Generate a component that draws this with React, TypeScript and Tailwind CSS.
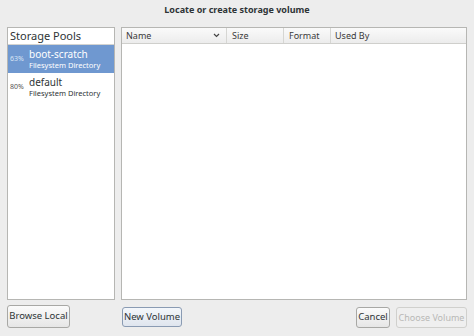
export default function App() {
  return (
    <div
      className="flex h-[336px] w-[474px] flex-col bg-[#ededed] text-[#2e3436]"
      style={{ fontFamily: '"Noto Sans", "DejaVu Sans", sans-serif' }}
    >
      {/* Title bar */}
      <div className="flex h-[20px] items-center justify-center text-[9px] font-bold text-[#2e3436]">
        Locate or create storage volume
      </div>

      {/* Panels */}
      <div className="flex flex-1 gap-[6px] px-[7px] pt-[7px]">
        <div className="flex w-[108px] flex-col border border-[#b6b6b3] bg-white">
          <div className="flex h-[17px] items-center border-b border-[#d3d3d0] px-[2px] text-[11px]">
            Storage Pools
          </div>
          <div className="flex h-[28px] items-center bg-[#6f98d0] text-white">
            <span className="w-[21px] pl-[2px] text-[7px] leading-[8px] text-[#dbe6f5]">63%</span>
            <div className="flex flex-col">
              <span className="text-[10px] leading-[12px]">boot-scratch</span>
              <span className="text-[7.5px] leading-[10px]">Filesystem Directory</span>
            </div>
          </div>
          <div className="flex h-[28px] items-center">
            <span className="w-[21px] pl-[2px] text-[7px] leading-[8px] text-[#555]">80%</span>
            <div className="flex flex-col">
              <span className="text-[10px] leading-[12px]">default</span>
              <span className="text-[7.5px] leading-[10px]">Filesystem Directory</span>
            </div>
          </div>
        </div>

        <div className="flex flex-1 flex-col border border-[#b6b6b3] bg-white">
          <div className="flex h-[16px] items-center border-b border-[#cfcfcc] bg-gradient-to-b from-[#fafafa] to-[#ececec] text-[9px] text-[#3a3a3a]">
            <div className="flex h-full w-[105px] items-center justify-between border-r border-[#d6d6d3] pl-[4px] pr-[6px]">
              <span>Name</span>
              <svg width="7" height="5" viewBox="0 0 7 5">
                <path d="M1 1 L3.5 3.5 L6 1" fill="none" stroke="#444" strokeWidth="1.2" />
              </svg>
            </div>
            <div className="flex h-full w-[57px] items-center border-r border-[#d6d6d3] pl-[5px]">Size</div>
            <div className="flex h-full w-[47px] items-center border-r border-[#d6d6d3] pl-[5px]">Format</div>
            <div className="flex h-full items-center pl-[4px]">Used By</div>
          </div>
        </div>
      </div>

      {/* Buttons */}
      <div className="flex h-[36px] items-start whitespace-nowrap px-[7px] pt-[5px] text-[9.5px]">
        <button className="h-[23px] w-[63px] rounded-[3px] border border-[#a8a8a5] bg-gradient-to-b from-[#fbfbfb] to-[#e6e6e6] text-[#2e3436]">
          Browse Local
        </button>
        <button className="ml-[52px] mt-[2px] h-[20px] w-[60px] rounded-[3px] border border-[#8a9bb3] bg-gradient-to-b from-[#f4f7fb] to-[#dfe5ee] text-[#2e3436]">
          New Volume
        </button>
        <div className="flex-1" />
        <button className="mt-[2px] h-[21px] w-[34px] rounded-[3px] border border-[#a8a8a5] bg-gradient-to-b from-[#fbfbfb] to-[#e6e6e6] text-[#2e3436]">
          Cancel
        </button>
        <button className="ml-[6px] mt-[2px] h-[21px] w-[71px] rounded-[3px] border border-[#d0d0cd] bg-[#efefef] text-[9px] text-[#b8b8b6]">
          Choose Volume
        </button>
      </div>
    </div>
  );
}
